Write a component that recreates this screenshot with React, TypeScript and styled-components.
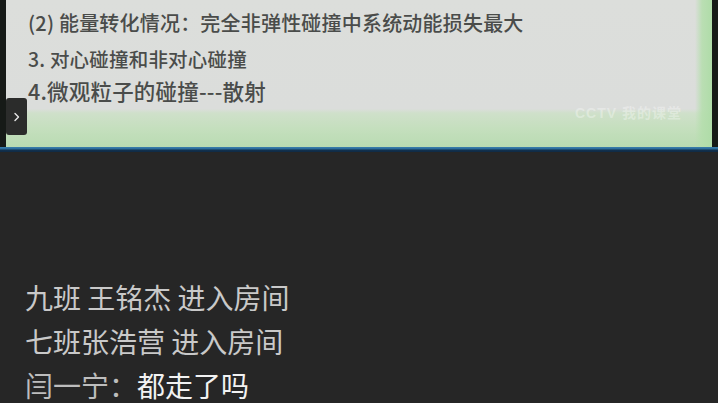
import React from "react";
import styled, { createGlobalStyle } from "styled-components";

const GlobalStyle = createGlobalStyle`
  html, body {
    margin: 0;
    padding: 0;
    background: #262626;
    font-family: "Noto Sans CJK SC", "Noto Sans", sans-serif;
  }
  #root {
    width: 718px;
    height: 403px;
    overflow: hidden;
  }
`;

const Page = styled.div`
  width: 718px;
  height: 403px;
  display: flex;
  flex-direction: column;
  background: #262626;
`;

const VideoArea = styled.div`
  position: relative;
  height: 147px;
  display: flex;
  flex-shrink: 0;
`;

const Edge = styled.div<{ $w: number }>`
  width: ${(p) => p.$w}px;
  background: #161a17;
  flex-shrink: 0;
`;

const Slide = styled.div`
  flex: 1;
  display: flex;
  flex-direction: column;
  background:
    linear-gradient(90deg, rgba(190, 225, 185, 0) 0%, rgba(190, 225, 185, 0) 97.6%, rgba(180, 222, 172, 0.85) 98.6%, rgba(175, 220, 168, 1) 100%),
    linear-gradient(180deg, #dcdedb 0%, #dbdddb 74%, #cfe0ca 77%, #c4dfbd 88%, #b9dbb2 100%);
  padding: 10px 0 0 22px;
  position: relative;
`;

const SlideLine = styled.div<{ $size: number; $mt: number }>`
  font-size: ${(p) => p.$size}px;
  line-height: ${(p) => p.$size + 6}px;
  margin-top: ${(p) => p.$mt}px;
  color: #4a4c4a;
  font-weight: 500;
  white-space: nowrap;
  letter-spacing: 0.2px;
`;

const Watermark = styled.div`
  position: absolute;
  right: 30px;
  bottom: 25px;
  font-size: 14px;
  font-weight: 700;
  color: rgba(255, 255, 255, 0.32);
  font-family: "Liberation Sans", "Noto Sans CJK SC", sans-serif;
  letter-spacing: 1px;
`;

const SideToggle = styled.button`
  position: absolute;
  left: 6px;
  top: 98px;
  width: 21px;
  height: 37px;
  border: none;
  border-radius: 3px;
  background: #2b2c2b;
  padding: 0;
  display: flex;
  align-items: center;
  justify-content: center;
  color: #e8e8e8;
`;

const Divider = styled.div`
  height: 5px;
  flex-shrink: 0;
  background: linear-gradient(180deg, #3a7fae 0%, #2a6a98 40%, #12324f 60%, #0f2a44 100%);
`;

const Dash = styled.div`
  width: 12px;
  height: 2px;
  margin: 2px auto 0;
  background: #6d6d72;
`;

const Chat = styled.div`
  display: flex;
  flex-direction: column;
  padding: 121px 0 0 25px;
`;

const ChatLine = styled.div`
  font-size: 28px;
  line-height: 44px;
  color: #c9c9c9;
  white-space: nowrap;
`;

const Speaker = styled.span`
  color: #bdbdbd;
`;

const Message = styled.span`
  color: #f2f2f2;
`;

export default function App() {
  return (
    <Page>
      <GlobalStyle />
      <VideoArea>
        <Edge $w={6} />
        <Slide>
          <SlideLine $size={20} $mt={0}>(2) 能量转化情况：完全非弹性碰撞中系统动能损失最大</SlideLine>
          <SlideLine $size={19.5} $mt={10}>3. 对心碰撞和非对心碰撞</SlideLine>
          <SlideLine $size={21.5} $mt={5}>4.微观粒子的碰撞---散射</SlideLine>
          <Watermark>CCTV 我的课堂</Watermark>
        </Slide>
        <Edge $w={6} />
        <SideToggle>
          <svg width="8" height="10" viewBox="0 0 8 10" fill="none">
            <path d="M2 1.5 L5.5 5 L2 8.5" stroke="currentColor" strokeWidth="1.4" strokeLinecap="round" strokeLinejoin="round" />
          </svg>
        </SideToggle>
      </VideoArea>
      <Divider />
      <Dash />
      <Chat>
        <ChatLine>九班 王铭杰 进入房间</ChatLine>
        <ChatLine>七班张浩营 进入房间</ChatLine>
        <ChatLine>
          <Speaker>闫一宁：</Speaker>
          <Message>都走了吗</Message>
        </ChatLine>
      </Chat>
    </Page>
  );
}
